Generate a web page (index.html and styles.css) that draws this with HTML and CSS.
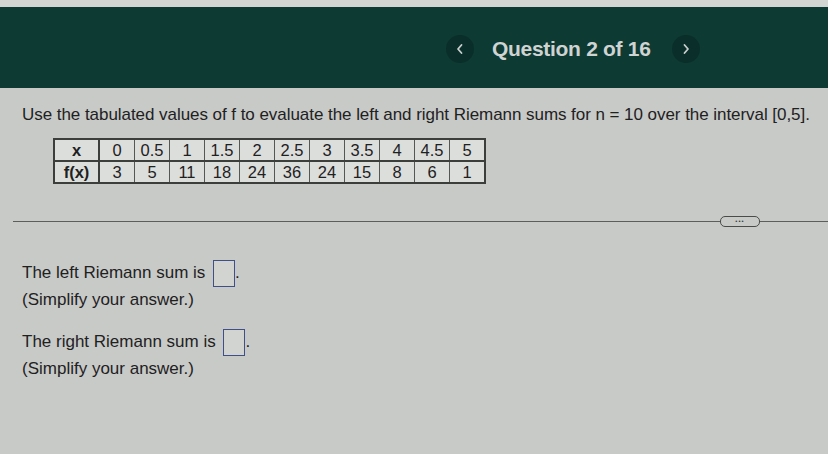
FILE: index.html
```html
<!DOCTYPE html>
<html>
<head>
<meta charset="utf-8">
<link rel="stylesheet" href="styles.css">
</head>
<body>
<div class="topstrip"></div>
<header class="header">
  <div class="nav">
    <button class="navbtn" aria-label="Previous">
      <svg width="10" height="12" viewBox="0 0 10 12"><path d="M6.5 2 L3 6 L6.5 10" fill="none" stroke="#c9cfcc" stroke-width="1.8" stroke-linecap="round" stroke-linejoin="round"/></svg>
    </button>
    <span class="qtitle">Question 2 of 16</span>
    <button class="navbtn" aria-label="Next">
      <svg width="10" height="12" viewBox="0 0 10 12"><path d="M3.5 2 L7 6 L3.5 10" fill="none" stroke="#c9cfcc" stroke-width="1.8" stroke-linecap="round" stroke-linejoin="round"/></svg>
    </button>
  </div>
</header>
<main class="content">
  <p class="prompt">Use the tabulated values of f to evaluate the left and right Riemann sums for n = 10 over the interval [0,5].</p>
  <table class="tbl">
    <tr><th>x</th><td>0</td><td>0.5</td><td>1</td><td>1.5</td><td>2</td><td>2.5</td><td>3</td><td>3.5</td><td>4</td><td>4.5</td><td>5</td></tr>
    <tr><th>f(x)</th><td>3</td><td>5</td><td>11</td><td>18</td><td>24</td><td>36</td><td>24</td><td>15</td><td>8</td><td>6</td><td>1</td></tr>
  </table>
  <div class="sep"><span class="line"></span><span class="more">&bull;&bull;&bull;</span><span class="line short"></span></div>
  <div class="answers">
    <div class="ans">
      <div>The left Riemann sum is <span class="box"></span>.</div>
      <div>(Simplify your answer.)</div>
    </div>
    <div class="ans">
      <div>The right Riemann sum is <span class="box"></span>.</div>
      <div>(Simplify your answer.)</div>
    </div>
  </div>
</main>
</body>
</html>
```
FILE: styles.css
```css
html, body {
  margin: 0;
  padding: 0;
}
body {
  width: 828px;
  height: 454px;
  overflow: hidden;
  background: #c8cac7;
  font-family: "Liberation Sans", Arial, sans-serif;
  color: #1f211f;
}
.topstrip {
  height: 7px;
  background: #d3d5d2;
}
.header {
  height: 81px;
  background: #0e3a34;
  display: flex;
  align-items: center;
}
.nav {
  display: flex;
  align-items: center;
  margin-left: 446px;
  margin-top: 2px;
}
.navbtn {
  width: 28px;
  height: 28px;
  border-radius: 50%;
  border: none;
  background: #0a2f2a;
  display: flex;
  align-items: center;
  justify-content: center;
  padding: 0;
}
.qtitle {
  font-weight: bold;
  font-size: 21px;
  color: #cfd3d1;
  margin: 0 21px 0 18px;
  letter-spacing: -0.3px;
}
.content {
  padding: 0 0 0 22px;
}
.prompt {
  margin: 17px 0 0 0;
  font-size: 17px;
  line-height: 20px;
  letter-spacing: -0.05px;
}
.tbl {
  margin: 13px 0 0 31px;
  border-collapse: collapse;
  border: 2px solid #3c3e3c;
  background: #dcdedb;
  font-size: 16.5px;
}
.tbl th, .tbl td {
  border: 1px solid #555755;
  height: 20px;
  padding: 0;
  text-align: center;
  width: 34px;
  line-height: 20px;
}
.tbl th {
  width: 43px;
  border-right: 2px solid #3c3e3c;
  font-weight: bold;
}
.tbl tr:first-child th, .tbl tr:first-child td {
  border-bottom: 2px solid #3c3e3c;
}
.sep {
  display: flex;
  align-items: center;
  margin: 32px 0 0 -9px;
}
.line {
  flex: 1;
  height: 1px;
  background: #5c5e5c;
}
.line.short {
  flex: 0 0 68px;
}
.more {
  width: 38px;
  height: 9px;
  border: 1px solid #4a4c4a;
  border-radius: 5px;
  font-size: 6px;
  line-height: 9px;
  text-align: center;
  color: #3a3c3a;
  letter-spacing: 1px;
}
.answers {
  margin-top: 33px;
  display: flex;
  flex-direction: column;
  gap: 16px;
  font-size: 17px;
  line-height: 26px;
}
.box {
  display: inline-block;
  width: 20px;
  height: 25px;
  border: 1px solid #3e4f8a;
  vertical-align: middle;
  margin-left: 3px;
  background: #d2d4d1;
}
```
